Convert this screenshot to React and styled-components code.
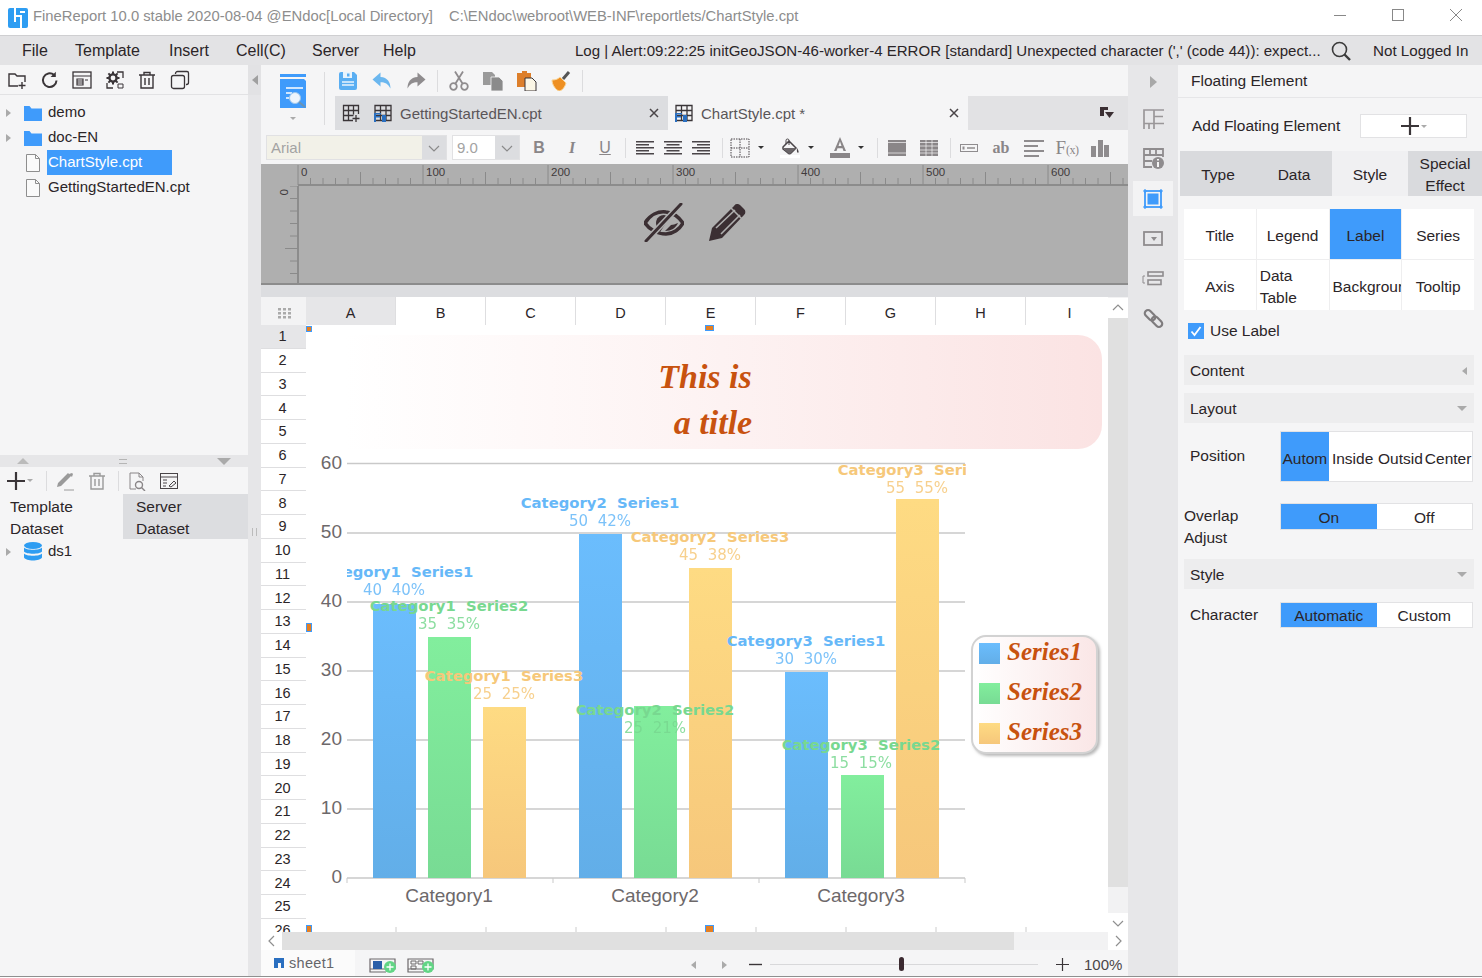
import React from "react"
import styled, { createGlobalStyle } from "styled-components"

const GlobalStyle = createGlobalStyle`
  html, body {
    margin: 0;
    padding: 0;
    background: #fff;
  }
  body {
    width: 1482px;
    height: 978px;
    overflow: hidden;
    font-family: "Liberation Sans", Arial, sans-serif;
    color: #2b2528;
  }
`

const BLUE = "#3f9bfb"

const App_ = styled.div`
  width: 1482px;
  height: 978px;
  display: flex;
  flex-direction: column;
  overflow: hidden;
`

/* title + menu */
const TitleBar = styled.div`
  height: 35px;
  flex: none;
  display: flex;
  align-items: center;
  border-bottom: 1px solid #cfcfd1;
  padding-left: 8px;
  font-size: 14.8px;
  color: #8d8d8d;
`

const TitleText = styled.span`
  margin-left: ${p => p.$ml}px;
  white-space: nowrap;
  margin-top: -3px;
`

const WinButtons = styled.div`
  margin-left: auto;
  display: flex;
  align-items: center;
  padding-right: 20px;
  gap: 46px;
  margin-top: -5px;
`

const MenuBar = styled.div`
  height: 29px;
  flex: none;
  display: flex;
  align-items: center;
  background: #e3e3e5;
  font-size: 16px;
`

const MenuItem = styled.span`
  margin-left: ${p => p.$ml}px;
  width: ${p => p.$w}px;
  flex: none;
  white-space: nowrap;
`

const LogText = styled.span`
  margin-left: 160px;
  width: 749px;
  flex: none;
  white-space: nowrap;
  font-size: 15.05px;
  overflow: hidden;
`

const LoginText = styled.span`
  margin-left: 22px;
  font-size: 15.2px;
  white-space: nowrap;
`

const Main = styled.div`
  height: 911px;
  flex: none;
  display: flex;
`

const FootLine = styled.div`
  height: 1px;
  flex: none;
  background: #8f8f8f;
`

/* left */
const LeftPanel = styled.div`
  width: 248px;
  flex: none;
  display: flex;
  flex-direction: column;
  background: #f5f5f6;
`

const LeftTop = styled.div`
  height: 390px;
  flex: none;
`

const LeftTools = styled.div`
  height: 29px;
  display: flex;
  align-items: center;
  gap: 12.5px;
  padding-left: 7px;
  border-bottom: 1px solid #e2e2e4;
`

const Tree = styled.div`
  padding-top: 5px;
`

const TreeRow = styled.div`
  height: 25px;
  display: flex;
  align-items: center;
  padding-left: 4px;
  font-size: 15px;
`

const IconSlot = styled.span`
  width: ${p => p.$w || 18}px;
  margin-left: ${p => p.$ml || 0}px;
  flex: none;
  display: flex;
  justify-content: center;
  align-items: center;
`

const TreeName = styled.span`
  margin-left: 5px;
  padding-left: 1px;
  height: 25px;
  line-height: 24px;
  width: ${p => (p.$selected ? "124px" : "auto")};
  background: ${p => (p.$selected ? BLUE : "transparent")};
  color: ${p => (p.$selected ? "#fff" : "inherit")};
`

const Caret = styled.span`
  width: 0;
  height: 0;
  flex: none;
  display: inline-block;
  margin-left: ${p => p.$ml || 0}px;
  ${p => {
    const s = p.$size || 4
    const c = p.$color || "#aaa"
    if (p.$dir === "right") return `border-top:${s}px solid transparent;border-bottom:${s}px solid transparent;border-left:${s + 1}px solid ${c};`
    if (p.$dir === "left") return `border-top:${s}px solid transparent;border-bottom:${s}px solid transparent;border-right:${s + 1}px solid ${c};`
    if (p.$dir === "up") return `border-left:${s}px solid transparent;border-right:${s}px solid transparent;border-bottom:${s}px solid ${c};`
    return `border-left:${s}px solid transparent;border-right:${s}px solid transparent;border-top:${s}px solid ${c};`
  }}
`

const HSplit = styled.div`
  height: 12px;
  flex: none;
  background: #e6e6e8;
  display: flex;
  align-items: center;
  justify-content: space-between;
  padding: 0 17px;
`

const GripH = styled.span`
  width: 8px;
  height: 3px;
  border-top: 1px solid #b5b5b5;
  border-bottom: 1px solid #b5b5b5;
`

const LeftTools2 = styled.div`
  height: 27px;
  flex: none;
  display: flex;
  align-items: center;
  padding-left: 7px;
`

const ToolSep = styled.span`
  width: 1px;
  height: ${p => p.$h || 20}px;
  flex: none;
  margin-left: ${p => p.$ml || 0}px;
  background: #dcdcde;
`

const DataTabs = styled.div`
  height: 45px;
  flex: none;
  display: flex;
`

const DataTab = styled.div`
  width: ${p => p.$w}px;
  padding: 2px 0 0 ${p => p.$pad}px;
  box-sizing: border-box;
  font-size: 15.5px;
  line-height: 22px;
  background: ${p => (p.$active ? "#f5f5f6" : "#dcdde0")};
`

const VSplit = styled.div`
  width: 13px;
  flex: none;
  background: #e6e6e8;
  display: flex;
  flex-direction: column;
  align-items: center;
`

const SplitArrowBox = styled.div`
  height: 30px;
  flex: none;
  display: flex;
  align-items: center;
  justify-content: center;
  width: 100%;
  background: #e2e2e4;
`

const GripV = styled.span`
  margin-top: 433px;
  width: 3px;
  height: 8px;
  border-left: 1px solid #bbb;
  border-right: 1px solid #bbb;
`

/* center */
const Center = styled.div`
  width: 867px;
  flex: none;
  display: flex;
  flex-direction: column;
`

const TopArea = styled.div`
  height: 66px;
  flex: none;
  display: flex;
  background: #f5f5f6;
`

const BigTool = styled.div`
  width: 64px;
  height: 53px;
  margin: 7px 10px 0 0;
  padding-top: 2px;
  box-sizing: border-box;
  flex: none;
  border-right: 1px solid #dcdcde;
  display: flex;
  flex-direction: column;
  align-items: center;
  gap: 9px;
`

const TopRight = styled.div`
  flex: 1;
  display: flex;
  flex-direction: column;
`

const QuickBar = styled.div`
  height: 31px;
  flex: none;
  display: flex;
  align-items: center;
  gap: 14px;
  padding-left: 3px;
`

const QuickSep = styled.span`
  width: 1px;
  height: 22px;
  margin: 0 -3px;
  background: #dcdcde;
`

const TabRow = styled.div`
  height: 34px;
  flex: none;
  display: flex;
  background: #e2e2e4;
`

const NewTab = styled.div`
  width: 32px;
  flex: none;
  display: flex;
  align-items: center;
  justify-content: center;
  background: #dcdde0;
`

const Tab = styled.div`
  width: ${p => p.$w}px;
  flex: none;
  box-sizing: border-box;
  display: flex;
  align-items: center;
  padding: 0 8px 0 7px;
  font-size: 15px;
  color: #5a5558;
  background: ${p => (p.$active ? "#f5f5f6" : "#dcdde0")};
`

const TabName = styled.span`
  margin-left: 8px;
  white-space: nowrap;
`

const TabClose = styled.span`
  margin-left: auto;
  display: flex;
`

const TabEnd = styled.div`
  flex: 1;
  display: flex;
  align-items: center;
  justify-content: flex-end;
  padding-right: 13px;
`

const FormatBar = styled.div`
  height: 33px;
  flex: none;
  display: flex;
  align-items: center;
  padding-left: 5px;
  background: #f5f5f6;
`

const Combo = styled.div`
  width: ${p => p.$w}px;
  margin-left: ${p => p.$ml || 0}px;
  height: 25px;
  box-sizing: border-box;
  flex: none;
  display: flex;
  border: 1px solid #e1e1e3;
  font-size: 15px;
  color: #a3a3a3;
`

const ComboField = styled.span`
  flex: 1;
  padding-left: 4px;
  line-height: 23px;
  background: ${p => p.$bg};
`

const ComboArrow = styled.span`
  width: 24px;
  background: #dcdde0;
  display: flex;
  align-items: center;
  justify-content: center;
`

const Tool = styled.span`
  width: ${p => p.$w || 20}px;
  margin-left: ${p => p.$ml || 0}px;
  flex: none;
  display: flex;
  align-items: ${p => (p.$base ? "baseline" : "center")};
  justify-content: center;
  font-size: ${p => p.$fs || 16}px;
  font-family: ${p => (p.$serif ? '"Liberation Serif", serif' : "inherit")};
  font-weight: ${p => p.$weight || 700};
  font-style: ${p => (p.$italic ? "italic" : "normal")};
  text-decoration: ${p => (p.$under ? "underline" : "none")};
  color: #8a8688;
`

const SmallPart = styled.span`
  font-size: 12px;
  font-weight: 400;
  letter-spacing: -0.5px;
`

const RulerArea = styled.div`
  height: 121px;
  flex: none;
  display: flex;
  flex-direction: column;
  background: #afafaf;
`

const RulerBody = styled.div`
  flex: 1;
  min-height: 0;
  display: flex;
  border-bottom: 2px solid #8c8c8c;
`

const DesignIcons = styled.div`
  display: flex;
  gap: 24px;
  padding: 17px 0 0 345px;
`

const Band = styled.div`
  height: 12px;
  flex: none;
  background: #dcdde0;
`

const SheetWrap = styled.div`
  height: 635px;
  flex: none;
  display: flex;
`

const SheetMain = styled.div`
  width: 847px;
  flex: none;
  display: flex;
  flex-direction: column;
`

const ColHeader = styled.div`
  height: 28px;
  flex: none;
  display: flex;
  background: #fff;
`

const Corner = styled.div`
  width: 45px;
  flex: none;
  background: #f3f3f4;
  display: flex;
  align-items: center;
  justify-content: center;
  padding-top: 3px;
  box-sizing: border-box;
`

const ColCell = styled.div`
  width: ${p => p.$w || 90}px;
  flex: none;
  box-sizing: border-box;
  display: flex;
  align-items: center;
  justify-content: center;
  padding: 4px 0 0 ${p => (p.$last ? 6 : 0)}px;
  font-size: 14.5px;
  border-right: 1px solid ${p => (p.$last ? "transparent" : "#dedee0")};
  background: ${p => (p.$selected ? "#e6e6e8" : "#fff")};
`

const SheetBody = styled.div`
  flex: 1;
  min-height: 0;
  display: flex;
`

const RowHeader = styled.div`
  width: 45px;
  flex: none;
  overflow: hidden;
  background: #fff;
`

const RowCell = styled.div`
  height: 23.75px;
  box-sizing: border-box;
  display: flex;
  align-items: center;
  justify-content: center;
  padding-right: 2px;
  font-size: 14.5px;
  border-bottom: 1px solid #dedee0;
  background: ${p => (p.$selected ? "#e6e6e8" : "#fff")};
`

const ChartSvg = styled.svg`
  display: block;
  flex: none;
`

const ScrollBtn = styled.div`
  width: ${p => p.$w || 20}px;
  height: ${p => p.$h || 20}px;
  flex: none;
  margin: ${p => (p.$end === "top" ? "auto 0 0 0" : p.$end === "left" ? "0 0 0 auto" : "0")};
  display: flex;
  align-items: center;
  justify-content: center;
  background: #fff;
`

const VScroll = styled.div`
  width: 20px;
  flex: none;
  display: flex;
  flex-direction: column;
  background: #f2f2f3;
  padding-top: 1px;
  box-sizing: border-box;
`

const VThumb = styled.div`
  height: 569px;
  flex: none;
  background: #e0e0e0;
`

const HScroll = styled.div`
  height: 18px;
  flex: none;
  display: flex;
  background: #f2f2f3;
`

const HThumb = styled.div`
  width: 732px;
  flex: none;
  background: #e0e0e0;
`

const StatusBar = styled.div`
  height: 26px;
  flex: none;
  box-sizing: border-box;
  padding-top: 3px;
  display: flex;
  align-items: center;
  background: #f5f5f6;
`

const SheetTab = styled.div`
  width: 94px;
  height: 26px;
  margin-top: -3px;
  flex: none;
  display: flex;
  align-items: center;
  padding-left: 13px;
  box-sizing: border-box;
  gap: 5px;
  font-size: 14.5px;
  color: #66666a;
  background: #fbfbfb;
  letter-spacing: 0.3px;
`

const Slider = styled.div`
  width: 268px;
  height: 1px;
  margin-left: 8px;
  flex: none;
  position: relative;
  background: #d8d8da;
`

const SliderThumb = styled.span`
  position: absolute;
  left: 129px;
  top: -7px;
  width: 5px;
  height: 14px;
  border-radius: 3px;
  background: #3b2a30;
`

const Percent = styled.span`
  margin-left: 15px;
  font-size: 15px;
  color: #4a4548;
`

/* rail */
const Rail = styled.div`
  width: 50px;
  flex: none;
  display: flex;
  flex-direction: column;
  align-items: center;
  background: #e7e7e9;
`

const RailTop = styled.div`
  height: 33px;
  display: flex;
  align-items: center;
  justify-content: center;
  margin-bottom: 3px;
`

const RailItem = styled.div`
  width: 40px;
  height: 35px;
  margin-bottom: 5px;
  flex: none;
  display: flex;
  align-items: center;
  justify-content: center;
  background: ${p => (p.$active ? "#f3f3f4" : "transparent")};
`

/* right */
const RightPanel = styled.div`
  flex: 1;
  background: #f5f5f6;
  font-size: 15.5px;
  display: flex;
  flex-direction: column;
`

const PanelHead = styled.div`
  height: 32px;
  flex: none;
  line-height: 32px;
  padding-left: 13px;
  border-bottom: 1px solid #e6e6e8;
`

const AddRow = styled.div`
  height: 53px;
  flex: none;
  display: flex;
  align-items: center;
  padding: 3px 0 0 14px;
  box-sizing: border-box;
`

const AddButton = styled.div`
  margin-left: 20px;
  width: 107px;
  height: 24px;
  box-sizing: border-box;
  border: 1px solid #e2e2e4;
  background: #fff;
  display: flex;
  align-items: center;
  justify-content: center;
  gap: 2px;
`

const MainTabs = styled.div`
  height: 45px;
  flex: none;
  margin-left: 2px;
  display: flex;
`

const MainTab = styled.div`
  width: ${p => p.$w || 76}px;
  flex: none;
  box-sizing: border-box;
  padding-top: 2px;
  display: flex;
  align-items: center;
  justify-content: center;
  text-align: center;
  line-height: 22px;
  background: ${p => (p.$active ? "#f0f0f2" : "#d9dadd")};
`

const SubGrid = styled.div`
  margin: 13px 8px 0 6px;
  height: 101px;
  flex: none;
  display: grid;
  grid-template-columns: repeat(4, 1fr);
  grid-template-rows: 50px 50px;
  gap: 1px;
  background: #eeeeef;
`

const SubCell = styled.div`
  display: flex;
  align-items: center;
  justify-content: ${p => (p.$start ? "flex-start" : "center")};
  padding: 3px 0 0 ${p => (p.$start ? 3 : 0)}px;
  line-height: 22px;
  overflow: hidden;
  white-space: ${p => (p.$wrap ? "normal" : "nowrap")};
  background: ${p => (p.$active ? BLUE : "#fff")};
`

const WrapText = styled.span`
  width: 50px;
`

const UseLabel = styled.div`
  height: 42px;
  flex: none;
  display: flex;
  align-items: center;
  gap: 6px;
  padding-left: 10px;
`

const CheckBox = styled.span`
  width: 16px;
  height: 16px;
  flex: none;
  background: ${BLUE};
  display: flex;
  align-items: center;
  justify-content: center;
`

const Section = styled.div`
  height: 30px;
  flex: none;
  box-sizing: border-box;
  margin: ${p => p.$mt}px 8px 0 6px;
  padding: 1px 7px 0 6px;
  display: flex;
  align-items: center;
  justify-content: space-between;
  background: #ededee;
`

const FormRow = styled.div`
  height: ${p => p.$h}px;
  flex: none;
  margin: ${p => p.$mt}px 9px 0 6px;
  display: flex;
  align-items: ${p => (p.$top ? "flex-start" : "center")};
`

const FormLabel = styled.div`
  width: 96px;
  flex: none;
  box-sizing: border-box;
  padding-left: ${p => (p.$flush ? 0 : 6)}px;
  padding-top: ${p => (p.$flush ? 2 : 0)}px;
  line-height: 22px;
  margin-top: ${p => p.$shift || 0}px;
`

const Seg = styled.div`
  flex: 1;
  height: 100%;
  box-sizing: border-box;
  display: flex;
  border: 1px solid #e2e2e4;
  background: #fff;
  overflow: hidden;
`

const SegItem = styled.div`
  flex: 1;
  min-width: 0;
  display: flex;
  align-items: center;
  justify-content: center;
  white-space: nowrap;
  padding-top: ${p => p.$pt || 2}px;
  background: ${p => (p.$on ? BLUE : "#fff")};
`

/* chart text */
const ChartText = styled.text`
  font-family: "Liberation Sans", Arial, sans-serif;
  font-size: ${p => p.$size}px;
  fill: #6d686a;
`

const DataName = styled.text`
  font-family: "DejaVu Sans", sans-serif;
  font-weight: 700;
  font-size: 14.8px;
  text-anchor: middle;
  white-space: pre;
  fill: ${p => p.$color};
`

const DataValue = styled.text`
  font-family: "DejaVu Sans", sans-serif;
  font-size: 15px;
  text-anchor: middle;
  white-space: pre;
  opacity: 0.85;
  fill: ${p => p.$color};
`

const SerifText = styled.text`
  font-family: "Liberation Serif", serif;
  font-weight: 700;
  font-style: italic;
  font-size: ${p => p.$size}px;
  text-anchor: ${p => p.$anchor || "start"};
  fill: #c8520f;
`

const RulerNum = styled.text`
  font-family: "Liberation Sans", Arial, sans-serif;
  font-size: 11.5px;
  fill: #3f3a3c;
`

/* icons */
const SvgEl = styled.svg`
  display: block;
  flex: none;
`

const Svg = ({ w = 20, h = 20, vb, children }) => (
  <SvgEl width={w} height={h} viewBox={vb || `0 0 ${w} ${h}`} fill="none">
    {children}
  </SvgEl>
)

const DARK = "#3a3538"
const GREY = "#8f8c8e"

const Logo = () => (
  <Svg w={20} h={20}>
    <rect x="0" y="0" width="20" height="20" rx="2" fill="#2e9df2" />
    <path d="M6 0h2v7h6v2H8v5H6z M12 3h5v2h-5z" fill="#fff" />
    <path d="M12 9h2v11h-2z" fill="#fff" />
  </Svg>
)

const Folder = () => (
  <Svg w={18} h={16}>
    <path d="M0 1h5.500l2 2.500H18V16H0z" fill={BLUE} />
  </Svg>
)

const FileIcon = () => (
  <Svg w={16} h={18}>
    <path d="M1.500 .5h9l4 4v13h-13z" fill="#fafafa" stroke="#8e8e8e" />
    <path d="M10.500 .5v4h4" stroke="#8e8e8e" />
  </Svg>
)

const Database = () => (
  <Svg w={18} h={19}>
    <ellipse cx="9" cy="3.500" rx="9" ry="3.500" fill="#2e9df2" />
    <path d="M0 5.500C2 8.500 16 8.500 18 5.500V9.500C16 12.500 2 12.500 0 9.500z" fill="#2e9df2" />
    <path d="M0 11.500C2 14.500 16 14.500 18 11.500V15.500C16 19.500 2 19.500 0 15.500z" fill="#2e9df2" />
  </Svg>
)

const TableIcon = () => (
  <Svg w={18} h={18}>
    <path d="M1 1.500h16v15H1z M1 6.500h16 M1 11.500h16 M6.500 1.500v15 M12 1.500v15" stroke={DARK} strokeWidth="1.300" />
    <path d="M0 9h7v1.500H2V12h4v1.500H2V18H0z M8 11h4v7H8z" fill="#2a6fc0" />
  </Svg>
)

const NewTableIcon = () => (
  <Svg w={18} h={18}>
    <path d="M11 16.500H1.500v-15h15V10 M1.500 6.500h15 M1.500 11.500h10 M6.500 1.500v15 M11.500 1.500v9" stroke={DARK} strokeWidth="1.300" />
    <path d="M14 11v7 M10.500 14.500h7" stroke={DARK} strokeWidth="1.300" />
  </Svg>
)

const Close = () => (
  <Svg w={12} h={12}>
    <path d="M2 2l8 8M10 2l-8 8" stroke="#4a4548" strokeWidth="1.500" />
  </Svg>
)

const IconNewFolder = () => (
  <Svg>
    <path d="M11 16H2V4h6l2 2h8v6" stroke={DARK} strokeWidth="1.400" />
    <path d="M15 12v7M11.500 15.500h7" stroke={DARK} strokeWidth="1.400" />
  </Svg>
)

const IconRefresh = () => (
  <Svg>
    <path d="M16.500 10.500a6.800 6.800 0 1 1-2.500-5.600" stroke={DARK} strokeWidth="2" />
    <path d="M15.800 1.800v5.200h-5.200z" fill={DARK} />
  </Svg>
)

const IconList = () => (
  <Svg>
    <rect x="1" y="2" width="18" height="16" stroke={DARK} strokeWidth="1.300" />
    <path d="M1 6h18 M5 9h6v6H5z M5 11h6 M5 13h6 M13 10h3" stroke={DARK} strokeWidth="1.200" />
  </Svg>
)

const IconGear = () => (
  <Svg>
    <path d="M12 2h6v6 M2 13v5h6" stroke={DARK} strokeWidth="1.300" />
    <circle cx="8" cy="8" r="3.600" stroke={DARK} strokeWidth="2.400" />
    <path d="M8 1.500v13 M1.500 8h13 M3.400 3.400l9.200 9.200 M12.600 3.400l-9.200 9.200" stroke={DARK} strokeWidth="2" strokeDasharray="2.400 8.200" />
    <path d="M13 14h5v4h-5z" stroke={DARK} />
  </Svg>
)

const IconTrash = ({ c = DARK }) => (
  <Svg>
    <path d="M2 5h16 M7 5V2.500h6V5 M4 5v13h12V5 M8 8v7 M12 8v7" stroke={c} strokeWidth="1.400" />
  </Svg>
)

const IconCopyPages = () => (
  <Svg>
    <rect x="1.500" y="5.500" width="13" height="13" rx="2" stroke={DARK} strokeWidth="1.300" />
    <path d="M5.500 4V3.500a2 2 0 0 1 2-2H17a1.500 1.500 0 0 1 1.500 1.500v9.500a2 2 0 0 1-2 2H16" stroke={DARK} strokeWidth="1.300" />
  </Svg>
)

const BigReport = () => (
  <Svg w={28} h={34}>
    <rect x="1" y="0" width="26" height="3" fill={BLUE} />
    <path d="M1 5h24l2 2v27H1z" fill={BLUE} />
    <path d="M7 14h17 M7 19h6 M7 24h4" stroke="#fff" strokeWidth="1.500" />
    <circle cx="16" cy="24" r="5.500" fill="#eef5fc" stroke="#9dc7ee" />
    <path d="M20 28l6 5" stroke="#6a93b6" strokeWidth="2" />
  </Svg>
)

const IconSave = () => (
  <Svg>
    <path d="M1 3a2 2 0 0 1 2-2h13l3 3v13a2 2 0 0 1-2 2H3a2 2 0 0 1-2-2z" fill="#5aaef2" />
    <path d="M5 1h9v6H5z" fill="#e9f4fd" />
    <path d="M9 2.500h2.500v3H9z" fill="#5aaef2" />
    <path d="M4 11h12 M4 14h12" stroke="#e9f4fd" strokeWidth="1.300" />
  </Svg>
)

const Arrow = ({ flip, c }) => (
  <Svg>
    <path
      transform={flip ? "matrix(-1 0 0 1 20 0)" : undefined}
      d="M8.500 1.500L.5 8.500l8 7v-4.300c4.500 0 7.500 1.500 10 6.300 0-6.500-3-11-10-11.500z"
      fill={c}
    />
  </Svg>
)

const IconCut = () => (
  <Svg>
    <circle cx="4.500" cy="15.500" r="3.300" stroke={GREY} strokeWidth="1.800" />
    <circle cx="15.500" cy="15.500" r="3.300" stroke={GREY} strokeWidth="1.800" />
    <path d="M6.500 12.500L14 .5M13.500 12.500L6 .5" stroke={GREY} strokeWidth="1.800" />
  </Svg>
)

const IconCopy = () => (
  <Svg>
    <path d="M0 1h9l3 3v10H0z" fill="#9a9a9a" />
    <path d="M8 6h8l4 4v10H8z" fill="#8b8b8b" stroke="#f5f5f6" strokeWidth=".8" />
  </Svg>
)

const IconPaste = () => (
  <Svg>
    <path d="M0 2h5V0h5v2h4v14H0z" fill="#dd7f2b" />
    <path d="M8 7h7l4 4v9H8z" fill="#fbf6e6" stroke="#3a3538" />
  </Svg>
)

const IconBrush = () => (
  <Svg>
    <path d="M1 9c4 0 6-1 8-3l6 6c-1 4-4 8-7 8-3-1-7-6-7-11z" fill="#ee8f22" stroke="#fbd79a" />
    <path d="M12 8l6-7" stroke="#555" strokeWidth="3" />
  </Svg>
)

const IconAlign = ({ mode }) => {
  const rows = [0, 1, 2, 3, 4]
  const short = i => i % 2 === 1
  return (
    <Svg w={18} h={16}>
      {rows.map(i => {
        const len = short(i) ? 13 : 18
        const x = mode === "center" ? (18 - len) / 2 : mode === "right" ? 18 - len : 0
        return <rect key={i} x={x} y={1 + i * 3} width={len} height="1.500" fill="#4a4548" />
      })}
    </Svg>
  )
}

const IconBorders = () => (
  <Svg w={20} h={20}>
    <rect x="1" y="1" width="18" height="18" stroke="#4a4548" strokeDasharray="1.500 1" />
    <path d="M1 10h18M10 1v18" stroke="#4a4548" strokeDasharray="1.500 1" />
  </Svg>
)

const IconFill = () => (
  <Svg w={20} h={20}>
    <path d="M3 9l6-6 7 7-5 5a2 2 0 0 1-3 0L3 11z" stroke="#4a4548" strokeWidth="1.500" fill="#f5f5f6" />
    <path d="M6 6V2.500a1.500 1.500 0 0 1 3 0V7" stroke="#4a4548" />
    <path d="M3 10h13l-5 5a2 2 0 0 1-3 0z" fill="#6b6669" />
    <path d="M17 10c1 2 2 3 1.500 4.500-1 .8-2 0-1.500-4.500z" fill="#4a4548" />
    <rect x="0" y="17" width="20" height="3" fill="#fff" />
  </Svg>
)

const IconLetterA = () => (
  <Svg w={20} h={21}>
    <path d="M4 14L10 0l6 14h-2.500l-1-2.800h-5L6.500 14z M8.500 9h3L10 4.500z" fill="#8a8688" fillRule="evenodd" />
    <rect y="16" width="20" height="5" fill="#8a8688" />
  </Svg>
)

const IconMerge = ({ grid }) => (
  <Svg w={18} h={16}>
    <rect x="0" y="0" width="18" height="16" fill="#8a8688" />
    <path d="M0 2.500h18 M0 13h18" stroke="#f5f5f6" strokeWidth=".7" />
    {grid && <path d="M6 0v16M12 0v16M0 6h18M0 10h18" stroke="#f5f5f6" strokeWidth=".7" />}
  </Svg>
)

const IconField = () => (
  <Svg w={18} h={8}>
    <rect x=".5" y=".5" width="17" height="7" stroke={GREY} />
    <path d="M7 4h8" stroke={GREY} strokeWidth="1.500" />
    <rect x="2.500" y="2.500" width="2" height="3" fill={GREY} />
  </Svg>
)

const IconLines = () => (
  <Svg w={20} h={18}>
    <path d="M0 2h20M0 7h14M0 12h20M0 17h15" stroke={GREY} strokeWidth="2" />
  </Svg>
)

const IconBars = () => (
  <Svg w={18} h={18}>
    <path d="M0 7h5v11H0zM7 1h5v17H7zM13 6h5v12h-5z" fill={GREY} />
  </Svg>
)

const HideEye = () => (
  <Svg w={40} h={39}>
    <path d="M1 20C6 12 14 8 22 9c5 .5 12 4 17 11-3 6-10 11-17 11-9 0-17-5-21-11z" stroke="#3b2f33" strokeWidth="3.500" />
    <path d="M12 20c0-5 4-8 8-8l6 2-10 15c-2-2-4-5-4-9z" fill="#3b2f33" />
    <path d="M2 38L37 1" stroke="#afafaf" strokeWidth="6" />
    <path d="M2 38L37 1" stroke="#3b2f33" strokeWidth="3" strokeLinecap="round" />
    <path d="M21 28c6 0 11-3 13-8-3 1-5 2-7 2z" fill="#3b2f33" />
  </Svg>
)

const Pencil = () => (
  <Svg w={38} h={39}>
    <path d="M1 38l3-13L26 3a4 4 0 0 1 6-1l4 4a4 4 0 0 1 0 6L14 35z" fill="#3b2f33" />
    <path d="M8 25L27 7 M13 31L32 12" stroke="#afafaf" strokeWidth="1.600" />
    <path d="M23 5l11 11" stroke="#afafaf" strokeWidth="1.600" />
  </Svg>
)

const HRule = () => {
  const ticks = []
  for (let i = 0; i < 67; i++) {
    const x = 37 + i * 12.5
    const top = i % 10 === 0 ? 1 : i % 5 === 0 ? 8 : 14
    ticks.push(<path key={i} d={`M${x} ${top}V21`} stroke="#8a8a8a" />)
  }
  return (
    <Svg w={867} h={22}>
      <rect y="20" x="37" width="830" height="2" fill="#8c8c8c" />
      {ticks}
      {[0, 100, 200, 300, 400, 500, 600].map((n, i) => (
        <RulerNum key={n} x={40 + i * 125} y={12}>{n}</RulerNum>
      ))}
    </Svg>
  )
}

const VRule = () => (
  <Svg w={38} h={97}>
    <path d="M37 0V97" stroke="#8c8c8c" strokeWidth="2" />
    {[0, 12.5, 25, 37.5, 50, 62.5, 75, 87.5].map((y, i) => (
      <path key={y} d={`M${i % 5 === 0 && i ? 24 : 29} ${y}H37`} stroke="#8a8a8a" />
    ))}
    <RulerNum transform="translate(19 3) rotate(90)" x="0" y="0">0</RulerNum>
  </Svg>
)

const RailGrid = () => (
  <Svg w={21} h={20}>
    <path d="M1 20V1h20 M1 14.500h20 M11 1v13.500 M11 7.500h9 M6 14.500V20 M11 14.500V20" stroke="#9a9799" strokeWidth="1.700" />
  </Svg>
)

const RailInfo = () => (
  <Svg w={21} h={21}>
    <path d="M9 19H1V1h19v8 M1 7h19 M1 13h8 M7 1v6 M13 1v6" stroke={GREY} strokeWidth="1.800" />
    <circle cx="15" cy="15" r="6" fill={GREY} />
    <path d="M15 14v5 M15 11v1.500" stroke="#fff" strokeWidth="1.800" />
  </Svg>
)

const RailFloat = () => (
  <Svg w={20} h={20}>
    <rect x="2" y="2" width="16" height="16" stroke={BLUE} strokeWidth="1.800" />
    <rect x="4.500" y="4.500" width="11" height="11" fill={BLUE} />
    <path d="M0 2h4M2 0v4M16 2h4M18 0v4M0 18h4M2 16v4M16 18h4M18 16v4" stroke={BLUE} strokeWidth="1.200" />
  </Svg>
)

const RailDrop = () => (
  <Svg w={20} h={15}>
    <rect x="1" y="1" width="18" height="13" stroke={GREY} strokeWidth="1.800" />
    <path d="M8 6h6l-3 4z" fill={GREY} />
  </Svg>
)

const RailStack = () => (
  <Svg w={22} h={15}>
    <path d="M3 5H1v7h2" stroke={GREY} />
    <rect x="6" y="1" width="15" height="4" stroke={GREY} strokeWidth="1.600" />
    <rect x="6" y="9" width="13" height="4.500" stroke={GREY} strokeWidth="1.600" />
  </Svg>
)

const RailLink = () => (
  <Svg w={21} h={21}>
    <rect x="1" y="4" width="12" height="6.500" rx="3.200" transform="rotate(45 7 7.250)" stroke="#7f7c7e" strokeWidth="2.200" />
    <rect x="8" y="10.500" width="12" height="6.500" rx="3.200" transform="rotate(45 14 13.750)" stroke="#7f7c7e" strokeWidth="2.200" />
  </Svg>
)

const PlusBig = ({ s = 18, c = DARK, w = 2.2 }) => (
  <Svg w={s} h={s}>
    <path d={`M${s / 2} 0V${s}M0 ${s / 2}H${s}`} stroke={c} strokeWidth={w} />
  </Svg>
)

const Chevron = ({ d, c = "#8f8f8f", w = 12, h = 12 }) => {
  const p = {
    up: "M1 8l5-5 5 5",
    down: "M1 4l5 5 5-5",
    left: "M8 1L3 6l5 5",
    right: "M4 1l5 5-5 5"
  }[d]
  return (
    <Svg w={w} h={h} vb="0 0 12 12">
      <path d={p} stroke={c} strokeWidth="1.200" />
    </Svg>
  )
}

const PlusLine = () => (
  <Svg w={13} h={3}>
    <path d="M0 1.500h13" stroke="#3a3538" strokeWidth="1.400" />
  </Svg>
)

/* chart data */
const SERIES = [
  { name: "Series1", color: "#66b8f8", top: "#6bbdfd", bottom: "#62aee8", id: "s1" },
  { name: "Series2", color: "#78d890", top: "#82ee9d", bottom: "#78db94", id: "s2" },
  { name: "Series3", color: "#f6c87a", top: "#fedb83", bottom: "#f6c77b", id: "s3" }
]

const BARS = [
  { x: 373, y: 604, s: 0, c: "Category1", v: "40  40%", cx: 394, ly: 577 },
  { x: 428, y: 637, s: 1, c: "Category1", v: "35  35%", cx: 449, ly: 611 },
  { x: 483, y: 707, s: 2, c: "Category1", v: "25  25%", cx: 504, ly: 681 },
  { x: 579, y: 534, s: 0, c: "Category2", v: "50  42%", cx: 600, ly: 508 },
  { x: 634, y: 706, s: 1, c: "Category2", v: "25  21%", cx: 655, ly: 715 },
  { x: 689, y: 568, s: 2, c: "Category2", v: "45  38%", cx: 710, ly: 542 },
  { x: 785, y: 672, s: 0, c: "Category3", v: "30  30%", cx: 806, ly: 646 },
  { x: 841, y: 775, s: 1, c: "Category3", v: "15  15%", cx: 861, ly: 750 },
  { x: 896, y: 499, s: 2, c: "Category3", v: "55  55%", cx: 917, ly: 475 }
]

const GRID_LINES = [[60, 463.5], [50, 533], [40, 602], [30, 671], [20, 740], [10, 809], [0, 878]]

const HANDLES = [[306, 326, 5, 5], [705, 325, 8, 5], [306, 623, 5, 8], [306, 925, 5, 7], [705, 925, 8, 7]]

const Chart = () => (
  <ChartSvg width="802" height="607" viewBox="306 325 802 607">
    <defs>
      <linearGradient id="band" x1="0" x2="1" y1="0" y2="0">
        <stop offset="0" stopColor="#fff" />
        <stop offset="0.5" stopColor="#fdf2f2" />
        <stop offset="1" stopColor="#fbe3e3" />
      </linearGradient>
      <linearGradient id="legendBg" x1="0" x2="1" y1="0" y2="0">
        <stop offset="0" stopColor="#fff" />
        <stop offset="1" stopColor="#fae6e6" />
      </linearGradient>
      {SERIES.map(s => (
        <linearGradient key={s.id} id={s.id} x1="0" x2="0" y1="0" y2="1">
          <stop offset="0" stopColor={s.top} />
          <stop offset="1" stopColor={s.bottom} />
        </linearGradient>
      ))}
      <clipPath id="plot">
        <rect x="347" y="440" width="619" height="480" />
      </clipPath>
      <filter id="legendShadow" x="-10%" y="-10%" width="125%" height="125%">
        <feDropShadow dx="2" dy="2" stdDeviation="1.500" floodColor="#999" floodOpacity="0.7" />
      </filter>
    </defs>

    <path d="M345 335H1078a24 24 0 0 1 24 24v66a24 24 0 0 1-24 24H345z" fill="url(#band)" />
    <SerifText $size={34} $anchor="middle" x="705" y="388">This is</SerifText>
    <SerifText $size={34} $anchor="middle" x="713" y="434">a title</SerifText>

    {GRID_LINES.map(([v, y]) => (
      <g key={v}>
        <path d={`M347 ${y}H965`} stroke="#c9c9c9" strokeWidth="1.300" />
        <ChartText $size={19} x="342" y={y + 5} textAnchor="end">{v}</ChartText>
      </g>
    ))}
    <path d="M553 878v5M759 878v5M965 878v5M347 878v5" stroke="#c9c9c9" />

    {BARS.map((b, i) => (
      <rect key={i} x={b.x} y={b.y} width="43" height={878 - b.y} fill={`url(#${SERIES[b.s].id})`} />
    ))}

    <g clipPath="url(#plot)">
      {BARS.map((b, i) => (
        <g key={i}>
          <DataName $color={SERIES[b.s].color} x={b.cx} y={b.ly}>{`${b.c}  ${SERIES[b.s].name}`}</DataName>
          <DataValue $color={SERIES[b.s].color} x={b.cx} y={b.ly + 18}>{b.v}</DataValue>
        </g>
      ))}
    </g>

    {["Category1", "Category2", "Category3"].map((c, i) => (
      <ChartText key={c} $size={19} x={449 + i * 206} y="902" textAnchor="middle">{c}</ChartText>
    ))}

    <rect x="972" y="636" width="125" height="117" rx="14" fill="url(#legendBg)" stroke="#d2d2d2" strokeWidth="2" filter="url(#legendShadow)" />
    {SERIES.map((s, i) => (
      <g key={s.id}>
        <rect x="979" y={643 + i * 40} width="21" height="21" fill={`url(#${s.id})`} />
        <SerifText $size={25} x="1007" y={660 + i * 40}>{s.name}</SerifText>
      </g>
    ))}

    {[396, 486, 576, 666, 756, 846, 936, 1026].map(x => (
      <path key={x} d={`M${x} 927v5`} stroke="#ccc" />
    ))}
    {HANDLES.map(([x, y, w, h], i) => (
      <rect key={i} x={x + 0.5} y={y + 0.5} width={w} height={h} fill="#e57f22" stroke={BLUE} />
    ))}
  </ChartSvg>
)

const COLS = ["A", "B", "C", "D", "E", "F", "G", "H", "I"]
const ROWS = Array.from({ length: 26 }, (_, i) => i + 1)

const SheetDots = () => (
  <Svg w={14} h={12}>
    {[0, 1, 2].map(r => [0, 1, 2].map(c => (
      <rect key={`${r}${c}`} x={1 + c * 5} y={1 + r * 4} width="3" height="2.500" fill="#aaa" />
    )))}
  </Svg>
)

const SheetAdd = ({ children }) => (
  <Svg w={28} h={16}>
    <path d="M1 2h25v10H1z M1 2v13h16" stroke="#6d686a" strokeWidth="1.200" />
    {children}
    <circle cx="21" cy="10" r="6" fill="#62d585" />
    <path d="M21 6.500v7M17.500 10h7" stroke="#fff" strokeWidth="1.300" />
  </Svg>
)

export default function App() {
  return (
    <App_>
      <GlobalStyle />
      <TitleBar>
        <Logo />
        <TitleText $ml={5}>FineReport 10.0 stable 2020-08-04 @ENdoc[Local Directory]</TitleText>
        <TitleText $ml={16}>C:\ENdoc\webroot\WEB-INF\reportlets/ChartStyle.cpt</TitleText>
        <WinButtons>
          <Svg w={12} h={12}><path d="M0 6.500h12" stroke="#888" /></Svg>
          <Svg w={12} h={12}><rect x=".5" y=".5" width="11" height="11" stroke="#888" /></Svg>
          <Svg w={12} h={12}><path d="M0 0l12 12M12 0L0 12" stroke="#888" /></Svg>
        </WinButtons>
      </TitleBar>

      <MenuBar>
        <MenuItem $ml={22} $w={25}>File</MenuItem>
        <MenuItem $ml={28} $w={66}>Template</MenuItem>
        <MenuItem $ml={28} $w={40}>Insert</MenuItem>
        <MenuItem $ml={27} $w={49}>Cell(C)</MenuItem>
        <MenuItem $ml={27} $w={44}>Server</MenuItem>
        <MenuItem $ml={27} $w={32}>Help</MenuItem>
        <LogText>Log | Alert:09:22:25 initGeoJSON-46-worker-4 ERROR [standard] Unexpected character (',' (code 44)): expect...</LogText>
        <IconSlot $w={20} $ml={7}>
          <Svg w={20} h={20}>
            <circle cx="8.500" cy="8.500" r="7" stroke="#3b3b3b" strokeWidth="1.600" />
            <path d="M13.500 13.500L19 19" stroke="#3b3b3b" strokeWidth="2.400" />
          </Svg>
        </IconSlot>
        <LoginText>Not Logged In</LoginText>
      </MenuBar>

      <Main>
        <LeftPanel>
          <LeftTop>
            <LeftTools>
              <IconNewFolder />
              <IconRefresh />
              <IconList />
              <IconGear />
              <IconTrash />
              <IconCopyPages />
            </LeftTools>
            <Tree>
              <TreeRow>
                <IconSlot $w={9}><Caret $dir="right" $color="#aaa" /></IconSlot>
                <IconSlot $ml={11}><Folder /></IconSlot>
                <TreeName>demo</TreeName>
              </TreeRow>
              <TreeRow>
                <IconSlot $w={9}><Caret $dir="right" $color="#aaa" /></IconSlot>
                <IconSlot $ml={11}><Folder /></IconSlot>
                <TreeName>doc-EN</TreeName>
              </TreeRow>
              <TreeRow>
                <IconSlot $ml={20}><FileIcon /></IconSlot>
                <TreeName $selected>ChartStyle.cpt</TreeName>
              </TreeRow>
              <TreeRow>
                <IconSlot $ml={20}><FileIcon /></IconSlot>
                <TreeName>GettingStartedEN.cpt</TreeName>
              </TreeRow>
            </Tree>
          </LeftTop>
          <HSplit>
            <Caret $dir="up" $size={6} $color="#bbb" />
            <GripH />
            <Caret $dir="down" $size={7} $color="#aaa" />
          </HSplit>
          <LeftTools2>
            <PlusBig />
            <Caret $ml={2} $size={3} />
            <ToolSep $ml={13} />
            <IconSlot $w={20} $ml={8}>
              <Svg>
                <path d="M2 16l1-4L13 2l3 3L6 15z M14 3l3-1 1 1-1 3" fill="#9a9a9a" />
                <path d="M9 19h10" stroke="#9a9a9a" />
              </Svg>
            </IconSlot>
            <IconSlot $w={20} $ml={12}><IconTrash c="#9a9a9a" /></IconSlot>
            <ToolSep $ml={11} />
            <IconSlot $w={20} $ml={8}>
              <Svg>
                <path d="M9 18H3V2h9l4 4v4 M12 2v4h4" stroke="#8a8688" />
                <circle cx="12" cy="14" r="3.500" stroke="#8a8688" strokeWidth="1.400" />
                <path d="M14.500 16.500L18 20" stroke="#8a8688" strokeWidth="1.400" />
              </Svg>
            </IconSlot>
            <IconSlot $w={20} $ml={12}>
              <Svg>
                <rect x="1.500" y="2.500" width="17" height="15" stroke="#4a4548" />
                <path d="M1.500 6h17 M4 9h4 M4 12h4 M4 15h3 M10 15l5-5 2 2-5 4z" stroke="#4a4548" />
              </Svg>
            </IconSlot>
          </LeftTools2>
          <DataTabs>
            <DataTab $w={123} $pad={10} $active>Template<br />Dataset</DataTab>
            <DataTab $w={125} $pad={13}>Server<br />Dataset</DataTab>
          </DataTabs>
          <TreeRow>
            <IconSlot $w={9}><Caret $dir="right" $color="#aaa" /></IconSlot>
            <IconSlot $ml={11}><Database /></IconSlot>
            <TreeName>ds1</TreeName>
          </TreeRow>
        </LeftPanel>

        <VSplit>
          <SplitArrowBox><Caret $dir="left" $size={5} $color="#a0a0a0" /></SplitArrowBox>
          <GripV />
        </VSplit>

        <Center>
          <TopArea>
            <BigTool>
              <BigReport />
              <Caret $size={3} $color="#aaa" />
            </BigTool>
            <TopRight>
              <QuickBar>
                <IconSave />
                <Arrow c="#6bb7ef" />
                <Arrow flip c="#8f8c8e" />
                <QuickSep />
                <IconCut />
                <IconCopy />
                <IconPaste />
                <IconBrush />
                <QuickSep />
              </QuickBar>
              <TabRow>
                <NewTab><NewTableIcon /></NewTab>
                <Tab $w={301}>
                  <TableIcon />
                  <TabName>GettingStartedEN.cpt</TabName>
                  <TabClose><Close /></TabClose>
                </Tab>
                <Tab $w={300} $active>
                  <TableIcon />
                  <TabName>ChartStyle.cpt *</TabName>
                  <TabClose><Close /></TabClose>
                </Tab>
                <TabEnd>
                  <Svg w={16} h={14}>
                    <path d="M1 1h8v3H5v6H1z" fill="#3b2f33" />
                    <path d="M6 6h9l-4.500 6z" fill="#3b2f33" />
                  </Svg>
                </TabEnd>
              </TabRow>
            </TopRight>
          </TopArea>

          <FormatBar>
            <Combo $w={181}>
              <ComboField $bg="#f2f1e8">Arial</ComboField>
              <ComboArrow><Chevron d="down" c="#8a8a8a" /></ComboArrow>
            </Combo>
            <Combo $w={68} $ml={5}>
              <ComboField $bg="#fff">9.0</ComboField>
              <ComboArrow><Chevron d="down" c="#8a8a8a" /></ComboArrow>
            </Combo>
            <Tool $w={24} $ml={7}>B</Tool>
            <Tool $w={24} $ml={9} $italic $serif>I</Tool>
            <Tool $w={24} $ml={9} $under $weight={400}>U</Tool>
            <ToolSep $ml={8} />
            <Tool $ml={9}><IconAlign mode="left" /></Tool>
            <Tool $ml={8}><IconAlign mode="center" /></Tool>
            <Tool $ml={8}><IconAlign mode="right" /></Tool>
            <ToolSep $ml={11} />
            <Tool $ml={7}><IconBorders /></Tool>
            <Caret $ml={8} $size={3} $color="#333" />
            <Tool $ml={16}><IconFill /></Tool>
            <Caret $ml={8} $size={3} $color="#333" />
            <Tool $ml={16}><IconLetterA /></Tool>
            <Caret $ml={8} $size={3} $color="#333" />
            <ToolSep $ml={13} />
            <Tool $ml={9}><IconMerge /></Tool>
            <Tool $ml={12}><IconMerge grid /></Tool>
            <ToolSep $ml={11} />
            <Tool $ml={8}><IconField /></Tool>
            <Tool $ml={12} $serif $fs={16}>ab</Tool>
            <Tool $ml={13}><IconLines /></Tool>
            <Tool $ml={12} $serif $base $fs={19} $weight={400} $w={22}>F<SmallPart>(x)</SmallPart></Tool>
            <Tool $ml={12}><IconBars /></Tool>
          </FormatBar>

          <RulerArea>
            <HRule />
            <RulerBody>
              <VRule />
              <DesignIcons>
                <HideEye />
                <Pencil />
              </DesignIcons>
            </RulerBody>
          </RulerArea>
          <Band />

          <SheetWrap>
            <SheetMain>
              <ColHeader>
                <Corner><SheetDots /></Corner>
                {COLS.map((c, i) => (
                  <ColCell key={c} $selected={i === 0} $last={i === 8} $w={i === 8 ? 82 : 90}>{c}</ColCell>
                ))}
              </ColHeader>
              <SheetBody>
                <RowHeader>
                  {ROWS.map(r => <RowCell key={r} $selected={r === 1}>{r}</RowCell>)}
                </RowHeader>
                <Chart />
              </SheetBody>
            </SheetMain>
            <VScroll>
              <ScrollBtn><Chevron d="up" /></ScrollBtn>
              <VThumb />
              <ScrollBtn $h={19} $end="top"><Chevron d="down" /></ScrollBtn>
            </VScroll>
          </SheetWrap>

          <HScroll>
            <ScrollBtn $w={21} $h={18}><Chevron d="left" /></ScrollBtn>
            <HThumb />
            <ScrollBtn $w={20} $h={18} $end="left"><Chevron d="right" /></ScrollBtn>
          </HScroll>

          <StatusBar>
            <SheetTab>
              <Svg w={10} h={10}>
                <path d="M0 0h10v10H7V5H4v5H0z" fill="#2a6fc0" />
              </Svg>
              sheet1
            </SheetTab>
            <IconSlot $w={28} $ml={14}>
              <SheetAdd><path d="M4 4h9v8H4z" fill="#2a5fa8" /></SheetAdd>
            </IconSlot>
            <IconSlot $w={28} $ml={10}>
              <SheetAdd><path d="M4 4h5v3H4z M11 4h5v3h-5z M4 9h5v3H4z" stroke="#6d686a" /></SheetAdd>
            </IconSlot>
            <IconSlot $w={10} $ml={253}><Caret $dir="left" $color="#aaa" /></IconSlot>
            <IconSlot $w={10} $ml={21}><Caret $dir="right" $color="#aaa" /></IconSlot>
            <IconSlot $w={13} $ml={20}><PlusLine /></IconSlot>
            <Slider><SliderThumb /></Slider>
            <IconSlot $w={13} $ml={18}><PlusBig s={13} c="#3a3538" w={1.2} /></IconSlot>
            <Percent>100%</Percent>
          </StatusBar>
        </Center>

        <Rail>
          <RailTop><Caret $dir="right" $size={6} $color="#a8a8a8" /></RailTop>
          <RailItem><RailGrid /></RailItem>
          <RailItem><RailInfo /></RailItem>
          <RailItem $active><RailFloat /></RailItem>
          <RailItem><RailDrop /></RailItem>
          <RailItem><RailStack /></RailItem>
          <RailItem><RailLink /></RailItem>
        </Rail>

        <RightPanel>
          <PanelHead>Floating Element</PanelHead>
          <AddRow>
            Add Floating Element
            <AddButton>
              <PlusBig />
              <Caret $size={3} $color="#aaa" />
            </AddButton>
          </AddRow>
          <MainTabs>
            <MainTab>Type</MainTab>
            <MainTab>Data</MainTab>
            <MainTab $active>Style</MainTab>
            <MainTab $w={74}>Special<br />Effect</MainTab>
          </MainTabs>
          <SubGrid>
            <SubCell>Title</SubCell>
            <SubCell>Legend</SubCell>
            <SubCell $active>Label</SubCell>
            <SubCell>Series</SubCell>
            <SubCell>Axis</SubCell>
            <SubCell $start $wrap><WrapText>Data Table</WrapText></SubCell>
            <SubCell $start>Backgrour</SubCell>
            <SubCell>Tooltip</SubCell>
          </SubGrid>
          <UseLabel>
            <CheckBox>
              <Svg w={12} h={12}><path d="M1.500 6.500l3 3.500 6-8" stroke="#fff" strokeWidth="1.800" /></Svg>
            </CheckBox>
            Use Label
          </UseLabel>
          <Section $mt={3}>Content<Caret $dir="left" $color="#aaa" /></Section>
          <Section $mt={8}>Layout<Caret $size={5} $color="#aaa" /></Section>
          <FormRow $h={51} $mt={8}>
            <FormLabel $shift={-1}>Position</FormLabel>
            <Seg>
              <SegItem $on $pt={4}>Autom</SegItem>
              <SegItem $pt={4}>Inside</SegItem>
              <SegItem $pt={4}>Outsid</SegItem>
              <SegItem $pt={4}>Center</SegItem>
            </Seg>
          </FormRow>
          <FormRow $h={27} $mt={21} $top>
            <FormLabel $flush>Overlap<br />Adjust</FormLabel>
            <Seg>
              <SegItem $on>On</SegItem>
              <SegItem>Off</SegItem>
            </Seg>
          </FormRow>
          <Section $mt={29}>Style<Caret $size={5} $color="#aaa" /></Section>
          <FormRow $h={26} $mt={13}>
            <FormLabel>Character</FormLabel>
            <Seg>
              <SegItem $on>Automatic</SegItem>
              <SegItem>Custom</SegItem>
            </Seg>
          </FormRow>
        </RightPanel>
      </Main>
      <FootLine />
    </App_>
  )
}
